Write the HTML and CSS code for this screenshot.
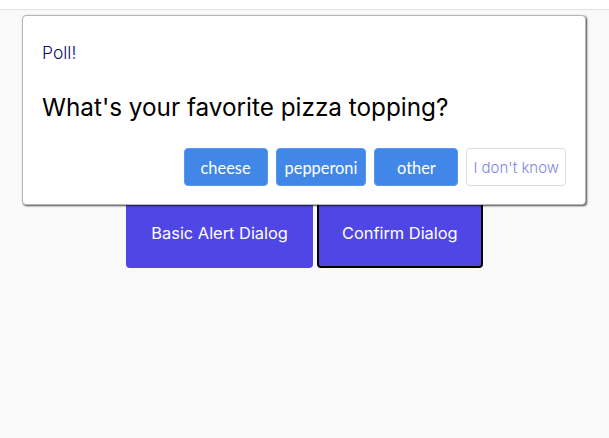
FILE: index.html
```html
<!DOCTYPE html>
<html lang="en">
<head>
<meta charset="utf-8">
<title>Dialogs</title>
<link rel="stylesheet" href="styles.css">
</head>
<body>
<header class="topbar"></header>
<main class="stage">
  <div class="actions">
    <button class="btn-main">Basic Alert Dialog</button>
    <button class="btn-main btn-focused">Confirm Dialog</button>
  </div>
</main>
<div class="dialog" role="dialog">
  <p class="dialog-title">Poll!</p>
  <p class="dialog-question">What's your favorite pizza topping?</p>
  <div class="dialog-buttons">
    <button class="choice">cheese</button>
    <button class="choice">pepperoni</button>
    <button class="choice">other</button>
    <button class="choice-ghost">I don't know</button>
  </div>
</div>
</body>
</html>
```

FILE: styles.css
```css
html, body {
  margin: 0;
  padding: 0;
  height: 100%;
}
body {
  background: #f9f9f9;
  font-family: Inter, "Liberation Sans", sans-serif;
  position: relative;
}
.topbar {
  height: 9px;
  background: #ffffff;
  border-bottom: 1px solid #e2e2e2;
}
.stage {
  padding-top: 188px;
}
.actions {
  display: flex;
  justify-content: center;
  gap: 4px;
}
.btn-main {
  height: 70px;
  padding: 0 25px;
  border: none;
  border-radius: 4px;
  background: #4f46e5;
  color: #ffffff;
  font-family: Inter, "Liberation Sans", sans-serif;
  font-size: 16.4px;
}
.btn-focused {
  border: 2px solid #000000;
  padding: 0 23px;
}
.dialog {
  position: absolute;
  top: 15px;
  left: 22px;
  width: 564px;
  height: 190px;
  box-sizing: border-box;
  background: #ffffff;
  border: 1px solid #b5b5b5;
  border-radius: 4px;
  box-shadow: 1px 1px 2px rgba(0, 0, 0, 0.7);
  padding: 27px 19px 18px 19px;
  display: flex;
  flex-direction: column;
}
.dialog-title {
  margin: 0;
  font-size: 17.5px;
  font-weight: 300;
  line-height: 20px;
  color: #10106e;
}
.dialog-question {
  margin: 31px 0 0 0;
  font-size: 24.3px;
  line-height: 27px;
  color: #000000;
}
.dialog-buttons {
  margin-top: auto;
  display: flex;
  justify-content: flex-end;
  gap: 8px;
}
.choice {
  height: 38px;
  min-width: 84px;
  padding: 0 8px;
  border: 1px solid #5a98ee;
  border-radius: 4px;
  background: #4087e8;
  color: #ffffff;
  font-family: Lato, "Noto Sans", sans-serif;
  font-size: 16.4px;
}
.choice-ghost {
  height: 38px;
  padding: 0 6px;
  border: 1px solid #dcdcdc;
  border-radius: 4px;
  background: #ffffff;
  color: #8186e6;
  font-family: Inter, "Liberation Sans", sans-serif;
  font-weight: 300;
  font-size: 15px;
}
```
